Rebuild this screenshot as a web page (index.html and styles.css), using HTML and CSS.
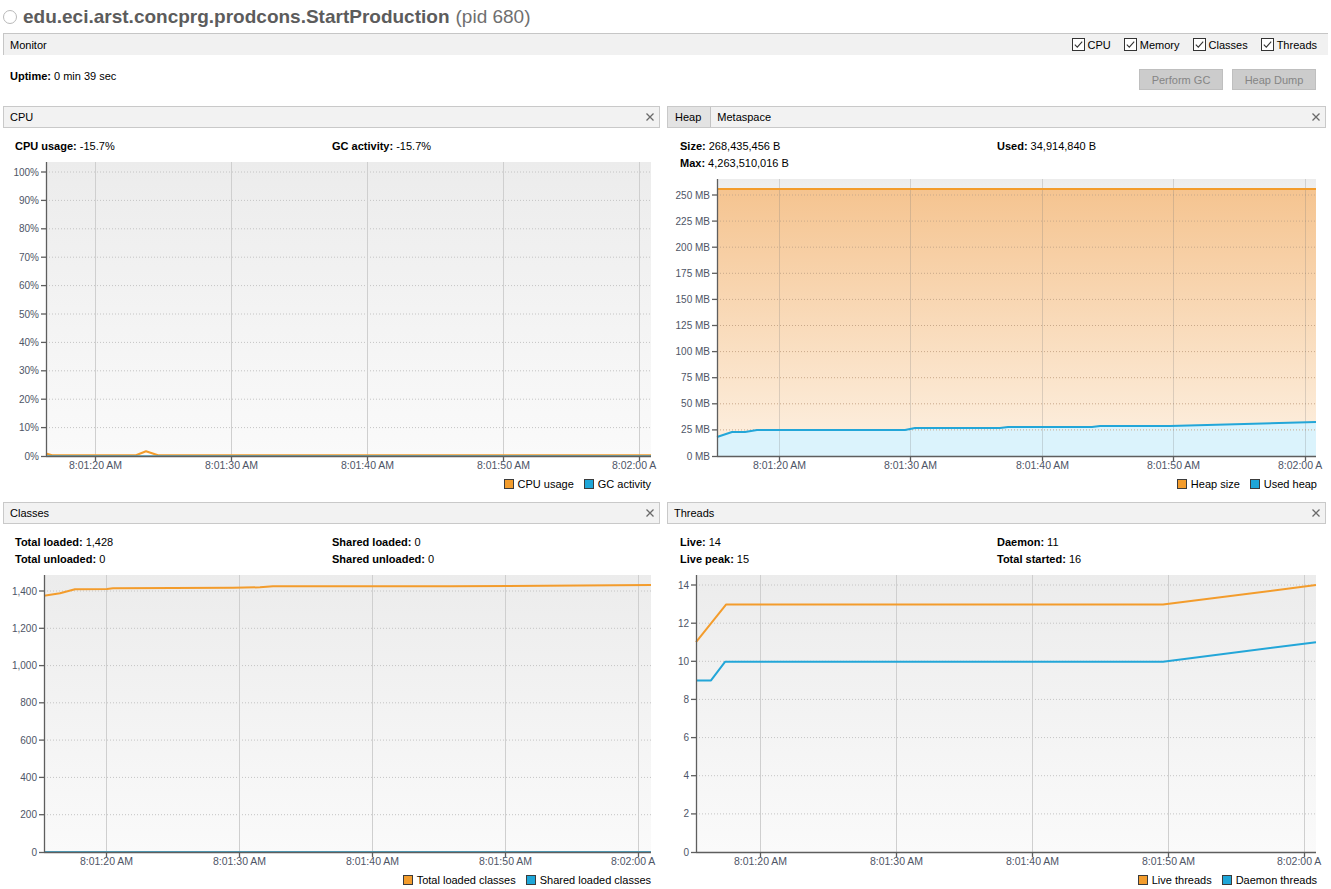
FILE: index.html
```html
<!DOCTYPE html>
<html>
<head>
<meta charset="utf-8">
<title>Monitor</title>
<link rel="stylesheet" href="styles.css">
</head>
<body>
<div class="app">
  <div class="title">
    <span class="proc-icon"></span>
    <span class="proc-name">edu.eci.arst.concprg.prodcons.StartProduction</span>
    <span class="pid">(pid 680)</span>
  </div>

  <div class="monitor-bar">
    <span class="bar-title">Monitor</span>
    <div class="checks">
      <span class="check"><svg class="box" viewBox="0 0 13 13"><rect x="0.5" y="0.5" width="12" height="12" fill="#fff" stroke="#333"/><path d="M2.8 6.6 L5.3 9.1 L10.2 3.6" fill="none" stroke="#333" stroke-width="1.1"/></svg>CPU</span>
      <span class="check"><svg class="box" viewBox="0 0 13 13"><rect x="0.5" y="0.5" width="12" height="12" fill="#fff" stroke="#333"/><path d="M2.8 6.6 L5.3 9.1 L10.2 3.6" fill="none" stroke="#333" stroke-width="1.1"/></svg>Memory</span>
      <span class="check"><svg class="box" viewBox="0 0 13 13"><rect x="0.5" y="0.5" width="12" height="12" fill="#fff" stroke="#333"/><path d="M2.8 6.6 L5.3 9.1 L10.2 3.6" fill="none" stroke="#333" stroke-width="1.1"/></svg>Classes</span>
      <span class="check"><svg class="box" viewBox="0 0 13 13"><rect x="0.5" y="0.5" width="12" height="12" fill="#fff" stroke="#333"/><path d="M2.8 6.6 L5.3 9.1 L10.2 3.6" fill="none" stroke="#333" stroke-width="1.1"/></svg>Threads</span>
    </div>
  </div>

  <div class="uptime-row">
    <div class="uptime"><b>Uptime:</b> 0 min 39 sec</div>
    <div class="buttons">
      <button class="btn" disabled>Perform GC</button>
      <button class="btn" disabled>Heap Dump</button>
    </div>
  </div>

  <div class="panels">
    <!-- CPU -->
    <section class="panel">
      <div class="panel-head">
        <span class="head-title">CPU</span>
        <svg class="close" viewBox="0 0 8 8"><path d="M0.5 0.5 L7.5 7.5 M7.5 0.5 L0.5 7.5" stroke="#6a6a6a" stroke-width="1.3"/></svg>
      </div>
      <div class="stats">
        <div><b>CPU usage:</b> -15.7%</div>
        <div><b>GC activity:</b> -15.7%</div>
      </div>
      <svg class="chart" width="657" height="314" viewBox="0 0 657 314">
        <defs>
          <linearGradient id="gCpu" x1="0" y1="0" x2="0" y2="1"><stop offset="0" stop-color="#ececec"/><stop offset="1" stop-color="#fafafa"/></linearGradient>
        </defs>
        <rect x="43" y="0" width="605" height="294" fill="url(#gCpu)"/>
        <g class="hgrid">
          <line x1="43" x2="648" y1="265.6" y2="265.6"/><line x1="43" x2="648" y1="237.2" y2="237.2"/>
          <line x1="43" x2="648" y1="208.8" y2="208.8"/><line x1="43" x2="648" y1="180.4" y2="180.4"/>
          <line x1="43" x2="648" y1="152" y2="152"/><line x1="43" x2="648" y1="123.6" y2="123.6"/>
          <line x1="43" x2="648" y1="95.2" y2="95.2"/><line x1="43" x2="648" y1="66.8" y2="66.8"/>
          <line x1="43" x2="648" y1="38.4" y2="38.4"/><line x1="43" x2="648" y1="10" y2="10"/>
        </g>
        <g class="vgrid">
          <line x1="92.5" x2="92.5" y1="0" y2="294"/><line x1="228.5" x2="228.5" y1="0" y2="294"/>
          <line x1="364.5" x2="364.5" y1="0" y2="294"/><line x1="500.5" x2="500.5" y1="0" y2="294"/>
          <line x1="636.5" x2="636.5" y1="0" y2="294"/>
        </g>
        <polyline class="ln-orange" points="43,291.5 49,293.3 133,293.3 143,289.3 155,293.3 648,293.3"/>
        <polyline class="ln-blue-thin" points="43,293.8 648,293.8"/>
        <g class="axis">
          <line x1="43.5" x2="43.5" y1="0" y2="295"/><line x1="43" x2="648" y1="294.5" y2="294.5"/>
          <line x1="38" x2="43" y1="294.5" y2="294.5"/><line x1="38" x2="43" y1="265.6" y2="265.6"/>
          <line x1="38" x2="43" y1="237.2" y2="237.2"/><line x1="38" x2="43" y1="208.8" y2="208.8"/>
          <line x1="38" x2="43" y1="180.4" y2="180.4"/><line x1="38" x2="43" y1="152" y2="152"/>
          <line x1="38" x2="43" y1="123.6" y2="123.6"/><line x1="38" x2="43" y1="95.2" y2="95.2"/>
          <line x1="38" x2="43" y1="66.8" y2="66.8"/><line x1="38" x2="43" y1="38.4" y2="38.4"/>
          <line x1="38" x2="43" y1="10" y2="10"/>
          <line x1="92.5" x2="92.5" y1="294" y2="299"/><line x1="228.5" x2="228.5" y1="294" y2="299"/>
          <line x1="364.5" x2="364.5" y1="294" y2="299"/><line x1="500.5" x2="500.5" y1="294" y2="299"/>
          <line x1="636.5" x2="636.5" y1="294" y2="299"/>
        </g>
        <g class="ylab">
          <text x="36" y="297.5">0%</text><text x="36" y="269.1">10%</text><text x="36" y="240.7">20%</text>
          <text x="36" y="212.3">30%</text><text x="36" y="183.9">40%</text><text x="36" y="155.5">50%</text>
          <text x="36" y="127.1">60%</text><text x="36" y="98.7">70%</text><text x="36" y="70.3">80%</text>
          <text x="36" y="41.9">90%</text><text x="36" y="13.5">100%</text>
        </g>
        <g class="xlab">
          <text x="92.5" y="307">8:01:20 AM</text><text x="228.5" y="307">8:01:30 AM</text>
          <text x="364.5" y="307">8:01:40 AM</text><text x="500.5" y="307">8:01:50 AM</text>
          <text class="last" x="609" y="307">8:02:00 A</text>
        </g>
      </svg>
      <div class="legend">
        <span class="leg"><i class="sw orange"></i>CPU usage</span>
        <span class="leg"><i class="sw blue"></i>GC activity</span>
      </div>
    </section>

    <!-- Heap -->
    <section class="panel">
      <div class="panel-head tabs-head">
        <div class="tabs">
          <span class="tab active">Heap</span>
          <span class="tab">Metaspace</span>
        </div>
        <svg class="close" viewBox="0 0 8 8"><path d="M0.5 0.5 L7.5 7.5 M7.5 0.5 L0.5 7.5" stroke="#6a6a6a" stroke-width="1.3"/></svg>
      </div>
      <div class="stats right">
        <div><b>Size:</b> 268,435,456 B</div>
        <div><b>Used:</b> 34,914,840 B</div>
        <div><b>Max:</b> 4,263,510,016 B</div>
        <div></div>
      </div>
      <svg class="chart" width="659" height="297" viewBox="0 0 659 297">
        <defs>
          <linearGradient id="gHeapBg" x1="0" y1="0" x2="0" y2="1"><stop offset="0" stop-color="#ececec"/><stop offset="1" stop-color="#f0f0f0"/></linearGradient>
          <linearGradient id="gHeap" x1="0" y1="0" x2="0" y2="1"><stop offset="0" stop-color="#f5c490"/><stop offset="1" stop-color="#fdf1e3"/></linearGradient>
        </defs>
        <rect x="50" y="0" width="599" height="11" fill="url(#gHeapBg)"/>
        <rect x="50" y="10" width="599" height="267" fill="url(#gHeap)"/>
        <polygon fill="#dbf3fc" points="50,258 65,253 78,253 90,251 238,251 248,249 333,249 341,248 425,248 433,247 503,247 649,243 649,277 50,277"/>
        <g class="hgrid heapgrid">
          <line x1="50" x2="649" y1="250.9" y2="250.9"/><line x1="50" x2="649" y1="224.8" y2="224.8"/>
          <line x1="50" x2="649" y1="198.7" y2="198.7"/><line x1="50" x2="649" y1="172.6" y2="172.6"/>
          <line x1="50" x2="649" y1="146.5" y2="146.5"/><line x1="50" x2="649" y1="120.4" y2="120.4"/>
          <line x1="50" x2="649" y1="94.3" y2="94.3"/><line x1="50" x2="649" y1="68.2" y2="68.2"/>
          <line x1="50" x2="649" y1="42.1" y2="42.1"/><line x1="50" x2="649" y1="16" y2="16"/>
        </g>
        <g class="vgrid heapv">
          <line x1="112.5" x2="112.5" y1="0" y2="277"/><line x1="243.5" x2="243.5" y1="0" y2="277"/>
          <line x1="375.5" x2="375.5" y1="0" y2="277"/><line x1="506.5" x2="506.5" y1="0" y2="277"/>
          <line x1="638.5" x2="638.5" y1="0" y2="277"/>
        </g>
        <polyline class="ln-orange" points="50,10 649,10"/>
        <polyline class="ln-blue" points="50,258 65,253 78,253 90,251 238,251 248,249 333,249 341,248 425,248 433,247 503,247 649,243"/>
        <g class="axis">
          <line x1="50.5" x2="50.5" y1="0" y2="278"/><line x1="50" x2="649" y1="277.5" y2="277.5"/>
          <line x1="45" x2="50" y1="277.5" y2="277.5"/><line x1="45" x2="50" y1="250.9" y2="250.9"/>
          <line x1="45" x2="50" y1="224.8" y2="224.8"/><line x1="45" x2="50" y1="198.7" y2="198.7"/>
          <line x1="45" x2="50" y1="172.6" y2="172.6"/><line x1="45" x2="50" y1="146.5" y2="146.5"/>
          <line x1="45" x2="50" y1="120.4" y2="120.4"/><line x1="45" x2="50" y1="94.3" y2="94.3"/>
          <line x1="45" x2="50" y1="68.2" y2="68.2"/><line x1="45" x2="50" y1="42.1" y2="42.1"/>
          <line x1="45" x2="50" y1="16" y2="16"/>
          <line x1="112.5" x2="112.5" y1="277" y2="282"/><line x1="243.5" x2="243.5" y1="277" y2="282"/>
          <line x1="375.5" x2="375.5" y1="277" y2="282"/><line x1="506.5" x2="506.5" y1="277" y2="282"/>
          <line x1="638.5" x2="638.5" y1="277" y2="282"/>
        </g>
        <g class="ylab">
          <text x="43" y="280.5">0 MB</text><text x="43" y="254.4">25 MB</text><text x="43" y="228.3">50 MB</text>
          <text x="43" y="202.2">75 MB</text><text x="43" y="176.1">100 MB</text><text x="43" y="150">125 MB</text>
          <text x="43" y="123.9">150 MB</text><text x="43" y="97.8">175 MB</text><text x="43" y="71.7">200 MB</text>
          <text x="43" y="45.6">225 MB</text><text x="43" y="19.5">250 MB</text>
        </g>
        <g class="xlab">
          <text x="112.5" y="290">8:01:20 AM</text><text x="243.5" y="290">8:01:30 AM</text>
          <text x="375.5" y="290">8:01:40 AM</text><text x="506.5" y="290">8:01:50 AM</text>
          <text class="last" x="611" y="290">8:02:00 A</text>
        </g>
      </svg>
      <div class="legend">
        <span class="leg"><i class="sw orange"></i>Heap size</span>
        <span class="leg"><i class="sw blue"></i>Used heap</span>
      </div>
    </section>

    <!-- Classes -->
    <section class="panel">
      <div class="panel-head">
        <span class="head-title">Classes</span>
        <svg class="close" viewBox="0 0 8 8"><path d="M0.5 0.5 L7.5 7.5 M7.5 0.5 L0.5 7.5" stroke="#6a6a6a" stroke-width="1.3"/></svg>
      </div>
      <div class="stats">
        <div><b>Total loaded:</b> 1,428</div>
        <div><b>Shared loaded:</b> 0</div>
        <div><b>Total unloaded:</b> 0</div>
        <div><b>Shared unloaded:</b> 0</div>
      </div>
      <svg class="chart" width="657" height="297" viewBox="0 0 657 297">
        <defs>
          <linearGradient id="gCls" x1="0" y1="0" x2="0" y2="1"><stop offset="0" stop-color="#ececec"/><stop offset="1" stop-color="#fafafa"/></linearGradient>
        </defs>
        <rect x="41" y="0" width="607" height="277" fill="url(#gCls)"/>
        <g class="hgrid">
          <line x1="41" x2="648" y1="239.7" y2="239.7"/><line x1="41" x2="648" y1="202.4" y2="202.4"/>
          <line x1="41" x2="648" y1="165.1" y2="165.1"/><line x1="41" x2="648" y1="127.8" y2="127.8"/>
          <line x1="41" x2="648" y1="90.6" y2="90.6"/><line x1="41" x2="648" y1="53.3" y2="53.3"/>
          <line x1="41" x2="648" y1="16" y2="16"/>
        </g>
        <g class="vgrid">
          <line x1="103.5" x2="103.5" y1="0" y2="277"/><line x1="236.5" x2="236.5" y1="0" y2="277"/>
          <line x1="369.5" x2="369.5" y1="0" y2="277"/><line x1="502.5" x2="502.5" y1="0" y2="277"/>
          <line x1="635.5" x2="635.5" y1="0" y2="277"/>
        </g>
        <polyline class="ln-orange" points="41,20.7 57,18.3 72,14.3 104,14 110,13.3 230,12.7 257,12.3 270,11.3 447,11.3 648,10"/>
        <polyline class="ln-blue-thin" points="41,276.6 648,276.6"/>
        <g class="axis">
          <line x1="41.5" x2="41.5" y1="0" y2="278"/><line x1="41" x2="648" y1="277.5" y2="277.5"/>
          <line x1="36" x2="41" y1="277.5" y2="277.5"/><line x1="36" x2="41" y1="239.7" y2="239.7"/>
          <line x1="36" x2="41" y1="202.4" y2="202.4"/><line x1="36" x2="41" y1="165.1" y2="165.1"/>
          <line x1="36" x2="41" y1="127.8" y2="127.8"/><line x1="36" x2="41" y1="90.6" y2="90.6"/>
          <line x1="36" x2="41" y1="53.3" y2="53.3"/><line x1="36" x2="41" y1="16" y2="16"/>
          <line x1="103.5" x2="103.5" y1="277" y2="282"/><line x1="236.5" x2="236.5" y1="277" y2="282"/>
          <line x1="369.5" x2="369.5" y1="277" y2="282"/><line x1="502.5" x2="502.5" y1="277" y2="282"/>
          <line x1="635.5" x2="635.5" y1="277" y2="282"/>
        </g>
        <g class="ylab">
          <text x="34" y="280.5">0</text><text x="34" y="243.2">200</text><text x="34" y="205.9">400</text>
          <text x="34" y="168.6">600</text><text x="34" y="131.3">800</text><text x="34" y="94.1">1,000</text>
          <text x="34" y="56.8">1,200</text><text x="34" y="19.5">1,400</text>
        </g>
        <g class="xlab">
          <text x="103.5" y="290">8:01:20 AM</text><text x="236.5" y="290">8:01:30 AM</text>
          <text x="369.5" y="290">8:01:40 AM</text><text x="502.5" y="290">8:01:50 AM</text>
          <text class="last" x="608" y="290">8:02:00 A</text>
        </g>
      </svg>
      <div class="legend">
        <span class="leg"><i class="sw orange"></i>Total loaded classes</span>
        <span class="leg"><i class="sw blue"></i>Shared loaded classes</span>
      </div>
    </section>

    <!-- Threads -->
    <section class="panel">
      <div class="panel-head">
        <span class="head-title">Threads</span>
        <svg class="close" viewBox="0 0 8 8"><path d="M0.5 0.5 L7.5 7.5 M7.5 0.5 L0.5 7.5" stroke="#6a6a6a" stroke-width="1.3"/></svg>
      </div>
      <div class="stats right">
        <div><b>Live:</b> 14</div>
        <div><b>Daemon:</b> 11</div>
        <div><b>Live peak:</b> 15</div>
        <div><b>Total started:</b> 16</div>
      </div>
      <svg class="chart" width="659" height="297" viewBox="0 0 659 297">
        <defs>
          <linearGradient id="gThr" x1="0" y1="0" x2="0" y2="1"><stop offset="0" stop-color="#ececec"/><stop offset="1" stop-color="#fafafa"/></linearGradient>
        </defs>
        <rect x="29" y="0" width="620" height="277" fill="url(#gThr)"/>
        <g class="hgrid">
          <line x1="29" x2="649" y1="238.9" y2="238.9"/><line x1="29" x2="649" y1="200.7" y2="200.7"/>
          <line x1="29" x2="649" y1="162.6" y2="162.6"/><line x1="29" x2="649" y1="124.4" y2="124.4"/>
          <line x1="29" x2="649" y1="86.3" y2="86.3"/><line x1="29" x2="649" y1="48.2" y2="48.2"/>
          <line x1="29" x2="649" y1="10" y2="10"/>
        </g>
        <g class="vgrid">
          <line x1="93.5" x2="93.5" y1="0" y2="277"/><line x1="229.5" x2="229.5" y1="0" y2="277"/>
          <line x1="365.5" x2="365.5" y1="0" y2="277"/><line x1="501.5" x2="501.5" y1="0" y2="277"/>
          <line x1="637.5" x2="637.5" y1="0" y2="277"/>
        </g>
        <polyline class="ln-orange" points="29,67.2 59,29.6 496,29.6 649,10"/>
        <polyline class="ln-blue" points="29,105.4 44,105.4 58,86.8 496,86.8 649,67.2"/>
        <g class="axis">
          <line x1="29.5" x2="29.5" y1="0" y2="278"/><line x1="29" x2="649" y1="277.5" y2="277.5"/>
          <line x1="24" x2="29" y1="277.5" y2="277.5"/><line x1="24" x2="29" y1="238.9" y2="238.9"/>
          <line x1="24" x2="29" y1="200.7" y2="200.7"/><line x1="24" x2="29" y1="162.6" y2="162.6"/>
          <line x1="24" x2="29" y1="124.4" y2="124.4"/><line x1="24" x2="29" y1="86.3" y2="86.3"/>
          <line x1="24" x2="29" y1="48.2" y2="48.2"/><line x1="24" x2="29" y1="10" y2="10"/>
          <line x1="93.5" x2="93.5" y1="277" y2="282"/><line x1="229.5" x2="229.5" y1="277" y2="282"/>
          <line x1="365.5" x2="365.5" y1="277" y2="282"/><line x1="501.5" x2="501.5" y1="277" y2="282"/>
          <line x1="637.5" x2="637.5" y1="277" y2="282"/>
        </g>
        <g class="ylab">
          <text x="22" y="280.5">0</text><text x="22" y="242.4">2</text><text x="22" y="204.2">4</text>
          <text x="22" y="166.1">6</text><text x="22" y="127.9">8</text><text x="22" y="89.8">10</text>
          <text x="22" y="51.7">12</text><text x="22" y="13.5">14</text>
        </g>
        <g class="xlab">
          <text x="93.5" y="290">8:01:20 AM</text><text x="229.5" y="290">8:01:30 AM</text>
          <text x="365.5" y="290">8:01:40 AM</text><text x="501.5" y="290">8:01:50 AM</text>
          <text class="last" x="610" y="290">8:02:00 A</text>
        </g>
      </svg>
      <div class="legend">
        <span class="leg"><i class="sw orange"></i>Live threads</span>
        <span class="leg"><i class="sw blue"></i>Daemon threads</span>
      </div>
    </section>
  </div>
</div>
</body>
</html>
```

FILE: styles.css
```css
* { box-sizing: border-box; }

html, body {
  margin: 0;
  padding: 0;
  background: #ffffff;
}

body {
  font-family: "Liberation Sans", Arial, sans-serif;
  font-size: 11px;
  color: #000;
  width: 1331px;
  height: 889px;
  overflow: hidden;
}

.app {
  display: flex;
  flex-direction: column;
}

/* Title */
.title {
  height: 33px;
  display: flex;
  align-items: center;
  padding-left: 3px;
  padding-top: 1px;
  font-size: 19px;
  white-space: nowrap;
}

.proc-icon {
  width: 14px;
  height: 14px;
  border-radius: 50%;
  border: 1.5px solid #b9b9b9;
  background: #fff;
  margin-right: 6px;
}

.proc-name {
  font-weight: bold;
  color: #5c5c5c;
}

.pid {
  color: #6f6f6f;
  margin-left: 6px;
}

/* Monitor bar */
.monitor-bar {
  margin: 0 3px 0 3px;
  height: 22px;
  border-top: 1px solid #c6c6c6;
  border-left: 1px solid #c6c6c6;
  background: #f1f1f1;
  display: flex;
  align-items: center;
  justify-content: space-between;
  padding: 0 11px 0 6px;
}

.checks {
  display: flex;
  align-items: center;
  gap: 13px;
}

.check {
  display: flex;
  align-items: center;
  gap: 3px;
}

.box {
  width: 13px;
  height: 13px;
  display: block;
}

/* Uptime row */
.uptime-row {
  height: 51px;
  display: flex;
  justify-content: space-between;
  align-items: flex-start;
  padding: 0 15px 0 10px;
}

.uptime {
  margin-top: 14px;
  line-height: 14px;
}

.buttons {
  margin-top: 14px;
  display: flex;
  gap: 9px;
}

.btn {
  width: 84px;
  height: 21px;
  background: #cccccc;
  border: 1px solid #bfbfbf;
  color: #858585;
  font-family: "Liberation Sans", Arial, sans-serif;
  font-size: 11px;
  padding: 0;
}

/* Panels */
.panels {
  display: grid;
  grid-template-columns: 657px 659px;
  grid-template-rows: 389px 389px;
  column-gap: 7px;
  row-gap: 7px;
  padding: 0 5px 0 3px;
}

.panel {
  display: flex;
  flex-direction: column;
  min-width: 0;
}

.panel-head {
  height: 22px;
  border: 1px solid #c9c9c9;
  background: #f2f2f2;
  display: flex;
  align-items: center;
  justify-content: space-between;
  padding: 0 5px 0 6px;
  flex: none;
}

.tabs-head {
  padding-left: 0;
}

.tabs {
  display: flex;
  height: 100%;
  align-items: stretch;
}

.tab {
  display: flex;
  align-items: center;
  padding: 0 6px;
}

.tab.active {
  background: #e3e3e3;
  border-right: 1px solid #c3c3c3;
  padding: 0 9px 0 7px;
}

.close {
  width: 8px;
  height: 8px;
  display: block;
}

.stats {
  display: grid;
  grid-template-columns: 317px 1fr;
  padding: 10px 0 7px 12px;
  line-height: 17px;
  flex: none;
}

.stats.right {
  padding-left: 13px;
  grid-template-columns: 317px 1fr;
}

.chart {
  display: block;
  flex: none;
}

.hgrid line {
  stroke: #c4c4c4;
  stroke-width: 1;
  stroke-dasharray: 1 2;
}

.heapgrid line {
  stroke: #c9a98a;
}

.vgrid line {
  stroke: #cfcfcf;
  stroke-width: 1;
}

.heapv line {
  stroke: rgba(120, 120, 120, 0.25);
}

.axis line {
  stroke: #5e5e5e;
  stroke-width: 1.3;
}

.ylab text {
  font-family: "Liberation Sans", Arial, sans-serif;
  font-size: 10px;
  fill: #4e5566;
  text-anchor: end;
}

.xlab text {
  font-family: "Liberation Sans", Arial, sans-serif;
  font-size: 10.5px;
  fill: #4e5566;
  text-anchor: middle;
}

.xlab text.last {
  text-anchor: start;
}

.ln-orange {
  fill: none;
  stroke: #f39c2c;
  stroke-width: 2;
  stroke-linejoin: round;
}

.ln-blue {
  fill: none;
  stroke: #23a6d8;
  stroke-width: 2;
  stroke-linejoin: round;
}

.ln-blue-thin {
  fill: none;
  stroke: #4aa7c8;
  stroke-width: 1.2;
}

/* Legend */
.legend {
  height: 16px;
  display: flex;
  justify-content: flex-end;
  align-items: center;
  gap: 10px;
  padding-right: 9px;
  flex: none;
}

.leg {
  display: flex;
  align-items: center;
  gap: 4px;
}

.sw {
  width: 10px;
  height: 10px;
  border: 1px solid #3c3c3c;
  display: block;
}

.sw.orange { background: #f39c2c; }
.sw.blue { background: #1ea6d8; }
```
